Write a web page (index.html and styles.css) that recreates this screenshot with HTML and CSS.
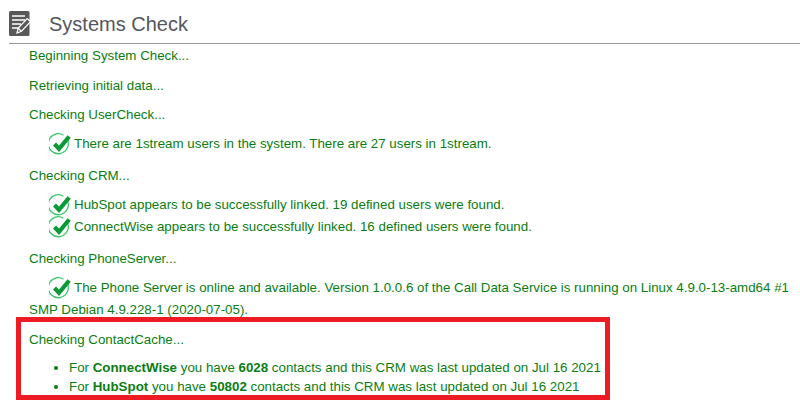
FILE: index.html
```html
<!DOCTYPE html>
<html lang="en">
<head>
  <meta charset="UTF-8">
  <title>Systems Check</title>
  <link rel="stylesheet" href="styles.css">
</head>
<body>
  <svg width="0" height="0" class="defs">
    <symbol id="check" viewBox="0 0 22 22">
      <path d="M17.800 5.500A10 10 0 1 1 14.500 2.200" fill="none" stroke="#3cc768" stroke-width="1.300"/>
      <path d="M5.500 11l4.500 4.800L20.200 3.500" fill="none" stroke="#0a9a35" stroke-width="4.200"/>
    </symbol>
  </svg>

  <header class="page-header">
    <svg class="header-icon" viewBox="0 0 22 25">
      <rect width="20.500" height="25" rx="1.500" fill="#58585a"/>
      <path d="M3 5h13M3 9h13M3 13h9M3 17h6" stroke="#fff" stroke-width="1.300"/>
      <path d="M8 22l1.200-5 9-9.500 3.300 3.200-9 9.500zM9.200 17l3.300 3.700" fill="#58585a" stroke="#fff" stroke-width="1.200"/>
    </svg>
    <h1>Systems Check</h1>
  </header>

  <main class="content">
    <p class="step">Beginning System Check...</p>
    <p class="step">Retrieving initial data...</p>
    <p class="step">Checking UserCheck...</p>
    <div class="results">
      <p class="result"><svg class="check"><use href="#check"/></svg>There are 1stream users in the system. There are 27 users in 1stream.</p>
    </div>
    <p class="step">Checking CRM...</p>
    <div class="results">
      <p class="result"><svg class="check"><use href="#check"/></svg>HubSpot appears to be successfully linked. 19 defined users were found.</p>
      <p class="result"><svg class="check"><use href="#check"/></svg>ConnectWise appears to be successfully linked. 16 defined users were found.</p>
    </div>
    <p class="step">Checking PhoneServer...</p>
    <div class="results">
      <p class="result"><svg class="check"><use href="#check"/></svg>The Phone Server is online and available. Version 1.0.0.6 of the Call Data Service is running on Linux 4.9.0-13-amd64 #1 SMP Debian 4.9.228-1 (2020-07-05).</p>
    </div>
    <section class="highlight">
      <p class="step">Checking ContactCache...</p>
      <ul class="cache-list">
        <li>For <strong>ConnectWise</strong> you have <strong>6028</strong> contacts and this CRM was last updated on Jul 16 2021</li>
        <li>For <strong>HubSpot</strong> you have <strong>50802</strong> contacts and this CRM was last updated on Jul 16 2021</li>
      </ul>
    </section>
  </main>
</body>
</html>
```

FILE: styles.css
```css
/* Base styles */
body, html {
  margin: 0;
  padding: 0;
  background-color: #fff;
  font-family: "Liberation Sans", Arial, sans-serif;
  font-size: 13.33px;
  color: #0a7d12;
  overflow: hidden;
}

.defs {
  display: block;
}

/* Header */
.page-header {
  display: flex;
  align-items: center;
  gap: 18px;
  height: 44px;
  margin-left: 9px;
  padding-top: 4px;
  box-sizing: border-box;
  border-bottom: 1px solid #999;
}

.header-icon {
  width: 22px;
  height: 25px;
}

.page-header h1 {
  margin: 1px 0 0;
  font-size: 20px;
  font-weight: 400;
  color: #55555f;
}

/* Check steps */
.content {
  padding-left: 29px;
  padding-top: 4px;
  width: 765px;
}

.step {
  margin: 0;
  line-height: 16px;
  padding-bottom: 13.5px;
}

.results {
  margin-top: -4px;
  margin-bottom: 13.5px;
}

.result {
  margin: 0;
  line-height: 22px;
}

.check {
  width: 22px;
  height: 22px;
  margin: -5px 3px -5px 20px;
  vertical-align: -2px;
}

/* Highlighted box */
.highlight {
  margin-left: -13px;
  margin-top: -17px;
  width: 576px;
  height: 63.5px;
  padding-left: 8px;
  padding-top: 9.5px;
  border: 5px solid #ed1c24;
}

.cache-list {
  margin: -3px 0 0;
  padding-left: 40px;
}

.cache-list li {
  line-height: 19px;
}
```
